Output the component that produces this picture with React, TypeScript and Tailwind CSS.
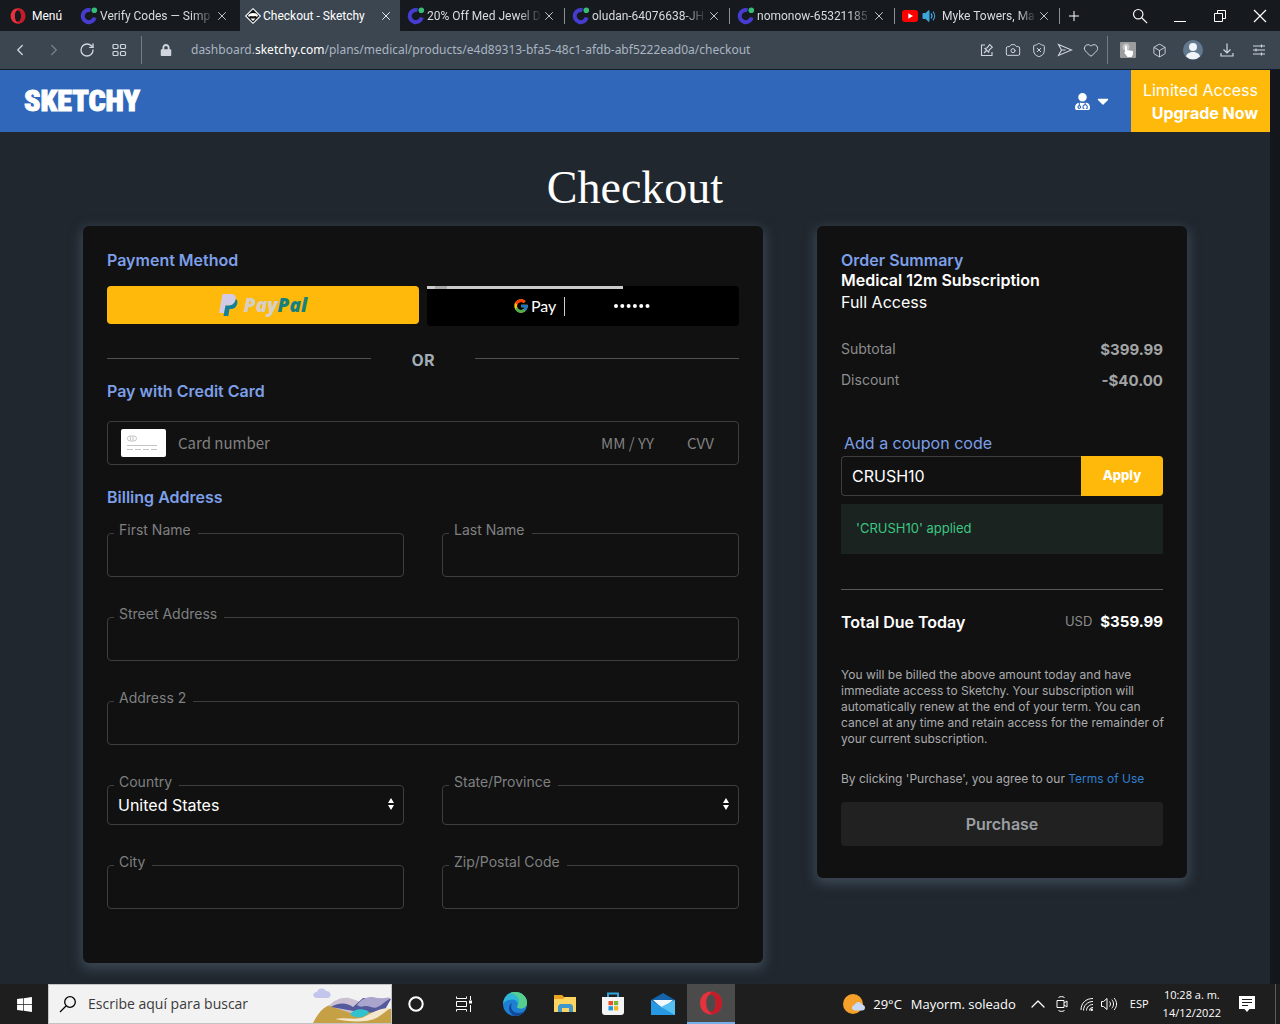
import { useState } from "react";
import type { ReactNode } from "react";
import {
  Box,
  Camera,
  ChevronLeft,
  ChevronRight,
  ChevronUp,
  Heart,
  Plus,
  RotateCw,
  ShieldX,
  X,
} from "lucide-react";
import { FaCaretDown, FaLock, FaUserMd, FaWindows } from "react-icons/fa";
import { FcGoogle } from "react-icons/fc";

function OperaLogo({ className }: { className: string }) {
  return (
    <svg className={className} viewBox="0 0 24 24" fillRule="evenodd">
      <path
        fill="#e5323c"
        d="M12 0.5C5.6 0.5 1 5.6 1 12s4.6 11.5 11 11.5S23 18.4 23 12 18.4 0.5 12 0.5zM12 3.2c2.900 0 4.700 3.700 4.700 8.800s-1.800 8.800-4.700 8.800S7.300 17.100 7.300 12 9.100 3.200 12 3.200z"
      />
      <path
        fill="#c51a27"
        d="M14.500 1c4.800 1 8.500 5.400 8.500 11s-3.700 10-8.500 11c-2 .3-3.500-.9-4.600-2.700 4.200 1.800 6.800-2.600 6.800-8.300S14.100 1.900 9.900 3.700C11 1.900 12.500.7 14.500 1z"
      />
    </svg>
  );
}

function SimplyIcon() {
  return (
    <svg className="h-[18px] w-[18px] shrink-0" viewBox="0 0 18 18" fill="none">
      <path d="M10.500 3.200A6.100 6.100 0 1 0 14.700 10.600" stroke="#463cd0" strokeWidth="4" />
      <circle cx="14.300" cy="3.200" r="2.800" fill="#35bd74" />
    </svg>
  );
}

function SketchyIcon() {
  return (
    <svg className="h-4 w-4 shrink-0" viewBox="0 0 16 16">
      <path d="M8 .7L15.300 8 8 15.300.7 8z" fill="#111" stroke="#e8eaec" strokeWidth="1.200" />
      <path d="M3 7.500C4.500 4 11.500 4 13 7.500L12 9c-1-1-2-1.200-2.500-.8h-3C6 7.800 5 8 4 9z" fill="#fff" />
      <path d="M5.500 10.500h5L8 13z" fill="#fff" />
    </svg>
  );
}

function YoutubeIcon() {
  return (
    <>
      <svg className="h-[18px] w-4 shrink-0" viewBox="0 0 16 18">
        <rect y="3" width="16" height="12" rx="3" fill="#f00" />
        <path d="M6.300 6.300v5.400L11 9z" fill="#fff" />
      </svg>
      <svg className="mx-1 h-[14px] w-[14px] shrink-0" viewBox="0 0 14 14" fill="none" stroke="#3fa4dc">
        <path d="M1 4.500h2.500L7 1.500v11L3.500 9.500H1z" fill="#3fa4dc" />
        <path d="M9 4.500c1.200 1.400 1.200 3.600 0 5M11 2.700c2.200 2.500 2.200 6.100 0 8.600" strokeWidth="1.200" />
      </svg>
    </>
  );
}

function MagnifierIcon({ className }: { className: string }) {
  return (
    <svg className={className} viewBox="0 0 18 18" fill="none" stroke="currentColor" strokeWidth="1.300">
      <circle cx="7" cy="7" r="5.300" />
      <path d="M11 11l6 6" />
    </svg>
  );
}

interface TabProps {
  icon: ReactNode;
  title: string;
  active?: boolean;
  divider?: boolean;
}

function BrowserTab({ icon, title, active, divider }: TabProps) {
  return (
    <div
      className={`flex min-w-0 items-center ${
        active ? "w-[160px] bg-[#3c4651] pr-[7px] pl-[5px] text-white" : "text-[#d9dcdf]"
      } ${divider ? "w-[165px] pl-[7px]" : ""} ${!active && !divider ? "w-[165px] pr-[11px] pl-[5px]" : ""}`}
    >
      {icon}
      <span
        className={`ml-[2px] min-w-0 flex-1 overflow-hidden whitespace-nowrap ${
          active ? "" : "[mask-image:linear-gradient(to_right,black_80%,transparent)]"
        }`}
      >
        {title}
      </span>
      <button aria-label={`Close ${title}`} className="shrink-0">
        <X size={14} strokeWidth={1.5} />
      </button>
      {divider && <span className="ml-2 h-4 w-px shrink-0 bg-[#8b9096]" />}
    </div>
  );
}

function TabStrip() {
  return (
    <div className="flex h-[31px] bg-[#16191e] font-['Roboto',sans-serif] text-xs text-white">
      <button className="flex w-[75px] shrink-0 items-center gap-[6px] pl-[10px]">
        <OperaLogo className="h-4 w-4" />
        Menú
      </button>
      <BrowserTab icon={<SimplyIcon />} title="Verify Codes — Simp" />
      <BrowserTab icon={<SketchyIcon />} title="Checkout - Sketchy" active />
      <BrowserTab icon={<SimplyIcon />} title="20% Off Med Jewel D" divider />
      <BrowserTab icon={<SimplyIcon />} title="oludan-64076638-JH" divider />
      <BrowserTab icon={<SimplyIcon />} title="nomonow-65321185" divider />
      <BrowserTab icon={<YoutubeIcon />} title="Myke Towers, Ma" divider />
      <button aria-label="New tab" className="ml-[6px]">
        <Plus size={16} strokeWidth={1.5} />
      </button>
      <div className="ml-auto flex shrink-0 items-center gap-6 pr-3">
        <button aria-label="Search tabs">
          <MagnifierIcon className="h-4 w-4" />
        </button>
        <button aria-label="Minimize" className="flex h-4 w-4 items-end justify-center pb-[2px]">
          <span className="h-px w-3 bg-white" />
        </button>
        <button aria-label="Restore">
          <svg className="h-4 w-4" viewBox="0 0 16 16" fill="none" stroke="currentColor">
            <path d="M2.500 5.500h8v8h-8zM5.500 5.500v-3h8v8h-3" />
          </svg>
        </button>
        <button aria-label="Close window">
          <svg className="h-4 w-4" viewBox="0 0 16 16" stroke="currentColor" strokeWidth="1.200">
            <path d="M2 2l12 12M14 2L2 14" />
          </svg>
        </button>
      </div>
    </div>
  );
}

function AddressBar() {
  return (
    <div className="flex h-[39px] items-center border-b border-[#101b2a] bg-[#3c4651] text-[#cfd6dd]">
      <div className="flex items-center gap-4 pl-[11px]">
        <button aria-label="Back">
          <ChevronLeft size={18} strokeWidth={1.750} />
        </button>
        <button aria-label="Forward" className="text-[#75808b]">
          <ChevronRight size={18} strokeWidth={1.750} />
        </button>
        <button aria-label="Reload">
          <RotateCw size={16} strokeWidth={2} />
        </button>
        <button aria-label="Speed dial">
          <svg className="h-4 w-4" viewBox="0 0 16 16" fill="none" stroke="currentColor" strokeWidth="1.200">
            <rect x="2" y="2.500" width="5" height="4" rx="1" />
            <rect x="9.500" y="2.500" width="5" height="4" rx="1" />
            <rect x="2" y="9.500" width="5" height="4" rx="1" />
            <rect x="9.500" y="9.500" width="5" height="4" rx="1" />
          </svg>
        </button>
      </div>
      <span className="ml-[14px] h-7 w-px bg-[#727c86]" />
      <FaLock size={12} className="mr-[19px] ml-[18px] shrink-0" />
      <p className="min-w-0 flex-1 truncate font-['Noto_Sans',sans-serif] text-xs text-[#a9b5c1]">
        dashboard.<span className="text-white">sketchy.com</span>
        /plans/medical/products/e4d89313-bfa5-48c1-afdb-abf5222ead0a/checkout
      </p>
      <div className="flex shrink-0 items-center gap-[10px]">
        <button aria-label="Pin">
          <svg className="h-4 w-4" viewBox="0 0 16 16" fill="none" stroke="currentColor" strokeWidth="1.100">
            <path d="M6 3H2.500v10.500H13V10" />
            <path d="M5 11l3-3M6 6.500l3.700 3.700.6-2.400 3-2.600L10.700 2.500 8.300 5.700z" />
          </svg>
        </button>
        <button aria-label="Snapshot">
          <Camera size={16} strokeWidth={1.500} />
        </button>
        <button aria-label="Blocker">
          <ShieldX size={16} strokeWidth={1.500} />
        </button>
        <button aria-label="Send">
          <svg className="h-4 w-4" viewBox="0 0 16 16" fill="none" stroke="currentColor" strokeWidth="1.100">
            <path d="M1.500 2.500L14.500 8l-13 5.500L4.500 8zM4.500 8h4" />
          </svg>
        </button>
        <button aria-label="Bookmark">
          <Heart size={16} strokeWidth={1.500} />
        </button>
      </div>
      <span className="mr-3 ml-2 h-7 w-px bg-[#727c86]" />
      <div className="flex shrink-0 items-center gap-4 pr-[13px]">
        <button aria-label="Extension">
          <svg className="h-4 w-4" viewBox="0 0 16 16">
            <rect width="16" height="16" rx="1" fill="#9b9d9e" />
            <circle cx="6" cy="5" r="3.500" fill="#c4c5c6" />
            <path d="M5 4.500c0-1.300 2-1.300 2 0V8l6 1v3.500L11.500 15H7.500L4 10.500l1-.5z" fill="#fff" />
          </svg>
        </button>
        <button aria-label="Extensions">
          <Box size={15} strokeWidth={1.500} />
        </button>
        <button aria-label="Profile">
          <svg className="h-5 w-5" viewBox="0 0 20 20">
            <circle cx="10" cy="10" r="10" fill="#61788f" />
            <circle cx="10" cy="7" r="4" fill="#f1f4f8" />
            <path d="M3 16.500c1-6 13-6 14 0a10 10 0 0 1-14 0z" fill="#f1f4f8" />
          </svg>
        </button>
        <button aria-label="Downloads">
          <svg className="h-4 w-4" viewBox="0 0 16 16" fill="none" stroke="currentColor" strokeWidth="1.200">
            <path d="M8 1.500v9M4.500 7.500L8 11l3.500-3.500M2 11v3h12v-3" />
          </svg>
        </button>
        <button aria-label="Easy setup">
          <svg className="h-4 w-4" viewBox="0 0 16 16" stroke="currentColor" strokeWidth="1.200">
            <path d="M2 4h12M2 8h12M2 12h12M10.500 2.500v3M5 6.500v3M10.500 10.500v3" />
          </svg>
        </button>
      </div>
    </div>
  );
}

function SiteHeader() {
  return (
    <header className="flex h-[62px] items-center bg-[#3067ba] pl-6 text-white">
      <a
        href="#"
        className="font-['Roboto_Condensed','Liberation_Sans_Narrow','Roboto',sans-serif] text-3xl font-black [-webkit-text-stroke:1px_white]"
      >
        SKETCHY
      </a>
      <button aria-label="Account menu" className="mr-[19px] ml-auto flex items-center gap-[3px]">
        <FaUserMd size={17} />
        <FaCaretDown size={18} />
      </button>
      <a href="#" className="flex h-full flex-col justify-center bg-[#ffb90a] px-3 pt-[2px] text-right leading-[23px]">
        <span>Limited Access</span>
        <span className="font-bold">Upgrade Now</span>
      </a>
    </header>
  );
}

interface FieldProps {
  id: string;
  label: string;
  wide?: boolean;
  options?: string[];
}

function Field({ id, label, wide, options }: FieldProps) {
  return (
    <div className={`relative ${wide ? "col-span-2" : ""}`}>
      <label
        htmlFor={id}
        className="absolute -top-3 left-[7px] bg-[#111] pr-[7px] pl-[5px] text-sm leading-[18px] text-[#7f8081]"
      >
        {label}
      </label>
      {options ? (
        <>
          <select
            id={id}
            className="block h-10 w-full appearance-none rounded border border-[#3d3e3f] bg-transparent px-[10px] text-base text-white"
          >
            {options.map((option) => (
              <option key={option}>{option}</option>
            ))}
          </select>
          <svg className="pointer-events-none absolute top-[13px] right-[9px] h-3 w-2" viewBox="0 0 8 12" fill="#fff">
            <path d="M4 0l3 5H1zM4 12l3-5H1z" />
          </svg>
        </>
      ) : (
        <input id={id} className="block h-11 w-full rounded border border-[#3d3e3f] bg-transparent px-[10px] text-white" />
      )}
    </div>
  );
}

function PaymentCard() {
  return (
    <section className="rounded-md bg-[#111] px-6 pt-6 pb-[54px] shadow-[0_4px_12px_2px_#3b4854]">
      <h2 className="font-semibold leading-5 text-[#7c9fe8]">Payment Method</h2>
      <div className="mt-4 grid grid-cols-2 items-start gap-2">
        <button aria-label="PayPal" className="flex h-[38px] items-center justify-center gap-[6px] rounded bg-[#ffb90a]">
          <svg className="h-[22px] w-[19px]" viewBox="0 0 19 22">
            <path d="M3.500 0h8c4.500 0 6 2.500 5 6-.8 3.500-3.500 5.500-7 5.500H6.500L5 19H0z" fill="#d3cbe6" />
            <path d="M16.800 5c2 1.200 1.900 3.500 1.200 5.500-1 3-3.200 4.500-6.500 4.500h-1l-1.200 7H4.500L6.500 11.500h3c3.500 0 6.300-2 7.300-6.500z" fill="#11809f" />
          </svg>
          <span className="font-['Open_Sans'] text-[19px] leading-5 font-extrabold text-[#d6cfc6] italic">
            Pay<span className="text-[#16807f]">Pal</span>
          </span>
        </button>
        <button
          aria-label="Google Pay"
          className="relative flex h-10 items-center rounded bg-black pl-[86px] text-white"
        >
          <span className="absolute top-0 left-0 flex h-[3px] w-[196px] bg-[#cbcbcb]">
            <span className="ml-2 w-3 bg-[#a9a9a9]" />
          </span>
          <FcGoogle size={16} />
          <span className="ml-[2px] font-['Lato']">Pay</span>
          <span className="ml-2 h-[19px] w-px bg-[#d0d0d0]" />
          <svg className="ml-[49px] h-1 w-9" viewBox="0 0 36 4" fill="#fff">
            <circle cx="2" cy="2" r="2" />
            <circle cx="8.300" cy="2" r="2" />
            <circle cx="14.600" cy="2" r="2" />
            <circle cx="20.900" cy="2" r="2" />
            <circle cx="27.200" cy="2" r="2" />
            <circle cx="33.500" cy="2" r="2" />
          </svg>
        </button>
      </div>

      <div className="mt-5 flex h-6 items-center gap-10">
        <span className="h-px flex-1 bg-[#4f5254]" />
        <span className="pt-px font-['Noto_Sans_CJK_SC',sans-serif] font-bold text-[#a3adb6]">OR</span>
        <span className="h-px flex-1 bg-[#4f5254]" />
      </div>

      <h2 className="mt-[11px] font-semibold leading-5 text-[#7c9fe8]">Pay with Credit Card</h2>
      <div className="mt-5 flex h-11 items-center rounded border border-[#3d3e3f] px-[13px] font-['Noto_Sans_CJK_SC',sans-serif] text-[15px]">
        <svg className="h-7 w-[45px] shrink-0" viewBox="0 0 45 28" fill="none" stroke="#c4c4c4">
          <rect width="45" height="28" rx="2" fill="#fff" stroke="none" />
          <rect x="6.500" y="7" width="9" height="5" rx="2.500" />
          <path d="M9.500 7.500v4M12 7.500v4" />
          <path d="M6 16.500h30" />
          <path d="M6 20.500h30" strokeDasharray="6 2" />
        </svg>
        <input
          aria-label="Card number"
          placeholder="Card number"
          className="ml-3 min-w-0 flex-1 bg-transparent text-white placeholder:text-[#808080]"
        />
        <input
          aria-label="Expiration date"
          placeholder="MM / YY"
          className="w-[86px] bg-transparent text-white placeholder:text-[#808080]"
        />
        <input
          aria-label="CVV"
          placeholder="CVV"
          className="w-[38px] bg-transparent text-white placeholder:text-[#808080]"
        />
      </div>

      <h2 className="mt-[22px] font-semibold leading-5 text-[#7c9fe8]">Billing Address</h2>
      <div className="mt-[26px] grid grid-cols-2 gap-x-[38px] gap-y-10">
        <Field id="first-name" label="First Name" />
        <Field id="last-name" label="Last Name" />
        <Field id="street" label="Street Address" wide />
        <Field id="address-2" label="Address 2" wide />
        <Field id="country" label="Country" options={["United States", "Mexico", "Canada"]} />
        <Field id="state" label="State/Province" options={["", "California", "New York"]} />
        <Field id="city" label="City" />
        <Field id="zip" label="Zip/Postal Code" />
      </div>
    </section>
  );
}

function OrderSummary() {
  const [coupon, setCoupon] = useState("CRUSH10");

  return (
    <section className="rounded-md bg-[#111] px-6 pt-6 pb-8 text-white shadow-[0_4px_12px_2px_#3b4854]">
      <h2 className="font-semibold leading-5 text-[#7c9fe8]">Order Summary</h2>
      <p className="font-semibold leading-5">Medical 12m Subscription</p>
      <p className="leading-6">Full Access</p>

      <dl className="mt-[19px] text-[#8c8d8e]">
        <div className="flex h-[31px] items-center justify-between">
          <dt className="text-sm">Subtotal</dt>
          <dd className="pt-[3px] text-[15px] font-bold text-[#a3a4a5]">$399.99</dd>
        </div>
        <div className="flex h-[31px] items-center justify-between">
          <dt className="text-sm">Discount</dt>
          <dd className="pt-[3px] text-[15px] font-bold text-[#a3a4a5]">-$40.00</dd>
        </div>
      </dl>

      <label htmlFor="coupon" className="mt-9 mb-px block pl-[3px] leading-6 text-[#7c9fe8]">
        Add a coupon code
      </label>
      <div className="flex h-10">
        <input
          id="coupon"
          value={coupon}
          onChange={(e) => setCoupon(e.target.value)}
          className="min-w-0 flex-1 rounded-l border border-r-0 border-[#3d3e3f] bg-transparent px-[10px] text-white"
        />
        <button className="w-[82px] rounded-r bg-[#ffb90a] text-[13px] font-extrabold">Apply</button>
      </div>
      <p className="mt-2 flex h-[50px] items-center bg-[#1a2320] px-[15px] text-[13px] text-[#3dc583]">
        'CRUSH10' applied
      </p>

      <div className="mt-[35px] flex items-center justify-between border-t border-[#58595a] pt-5">
        <span className="font-semibold">Total Due Today</span>
        <span className="flex items-center gap-2">
          <span className="text-[13px] text-[#8c8d8e]">USD</span>
          <span className="text-[15px] font-bold">$359.99</span>
        </span>
      </div>

      {/* slight overhang so the renewal copy keeps its five lines */}
      <p className="mt-[33px] -mr-1 text-xs leading-4 text-[#a9abad]">
        You will be billed the above amount today and have immediate access to Sketchy. Your subscription will
        automatically renew at the end of your term. You can cancel at any time and retain access for the remainder of
        your current subscription.
      </p>
      <p className="mt-6 text-xs leading-4 text-[#a9abad]">
        By clicking 'Purchase', you agree to our{" "}
        <a href="#" className="text-[#2f80d0]">
          Terms of Use
        </a>
      </p>
      <button className="mt-[15px] h-11 w-full rounded bg-[#212121] font-semibold text-[#9b9fa3]">Purchase</button>
    </section>
  );
}

function TaskbarApps() {
  return (
    <div className="flex h-full shrink-0 items-stretch">
      <button aria-label="Cortana" className="flex w-12 items-center justify-center">
        <svg className="h-4 w-4" viewBox="0 0 16 16" fill="none">
          <circle cx="8" cy="8" r="6.700" stroke="#fff" strokeWidth="2" />
        </svg>
      </button>
      <button aria-label="Task view" className="flex w-12 items-center justify-center">
        <svg className="h-4 w-4" viewBox="0 0 16 16" fill="none" stroke="#fff">
          <path d="M.5.5v2h10v-2M.5 5.500h10v5H.5zM.5 15.500v-2h10v2M14.500 0v4M14.500 9v7" />
          <path d="M13 4.500h3v3h-3z" fill="#fff" stroke="none" />
        </svg>
      </button>
      <button aria-label="Edge" className="flex w-[53px] items-center justify-center">
        <svg className="h-6 w-6" viewBox="0 0 24 24">
          <circle cx="12" cy="12" r="12" fill="#1e7fd3" />
          <path d="M0 12C1 4 6 0 12 0c7 0 12 5 12 10.500 0 4-3 6-6.500 6-3 0-4-1.200-3-2.700C16 11 13 7.500 9.500 7.500 5 7.500 1.500 9 0 12z" fill="#2fb6d5" />
          <path d="M12 0c7 0 12 5 12 10.500 0 4-3 6-6.500 6-3 0-4-1.200-3-2.700C18 9 16 2.500 7 1.200A12 12 0 0 1 12 0z" fill="#55cf8b" />
          <path d="M9.500 11c-3 3-1 10 6 10 3 0 5-1 7-3.500C20 22 16 24 12 24 5 22 4 13 9.500 11z" fill="#124a9a" />
        </svg>
      </button>
      <button aria-label="File Explorer" className="flex w-[47px] items-center justify-center">
        <svg className="h-6 w-[22px]" viewBox="0 0 22 24">
          <path d="M0 3h8l2 2h12v15H0z" fill="#e9a520" />
          <path d="M0 7h9l2-2h11v15H0z" fill="#fcd462" />
          <path d="M4 20v-6l2-2h11l2 2v6h-4v-4H8v4z" fill="#3f97d0" />
        </svg>
      </button>
      <button aria-label="Microsoft Store" className="flex w-[50px] items-center justify-center">
        <svg className="h-6 w-6" viewBox="0 0 24 24">
          <path d="M7 6V1.500h10V6" fill="none" stroke="#2ea3dc" strokeWidth="2" />
          <path d="M1 5h22v15a3 3 0 0 1-3 3H4a3 3 0 0 1-3-3z" fill="#f4f4f4" />
          <path d="M7.500 9H12v4.200H7.500z" fill="#e8502c" />
          <path d="M13 9h4.200v4.200H13z" fill="#7bb62f" />
          <path d="M7.500 14.200H12v4.200H7.500z" fill="#1f9ade" />
          <path d="M13 14.200h4.200v4.200H13z" fill="#f6b51d" />
        </svg>
      </button>
      <button aria-label="Mail" className="flex w-[49px] items-center justify-center">
        <svg className="h-6 w-6" viewBox="0 0 24 24">
          <path d="M0 8l12-7 12 7v14H0z" fill="#1464ac" />
          <path d="M2 8h20L12 17z" fill="#eef5fb" />
          <path d="M0 8l12 8 12-8v15H0z" fill="#2799e2" />
          <path d="M3 8h18l-9 6.500z" fill="#f4f9fd" />
          <path d="M24 8v15L10 15z" fill="#57c0f2" />
        </svg>
      </button>
      <button aria-label="Opera" className="flex w-12 items-center justify-center border-b-2 border-[#76b0e6] bg-[#4b4b4b]">
        <OperaLogo className="h-6 w-6" />
      </button>
    </div>
  );
}

function Taskbar() {
  return (
    <footer className="flex h-10 items-center bg-[#1e1e1e] text-sm text-white">
      <button aria-label="Start" className="flex w-12 shrink-0 items-center justify-center">
        <FaWindows size={17} />
      </button>
      <div className="flex h-full w-[344px] items-center border border-[#c4c4c4] bg-[#f2f2f2] pl-[10px] text-black">
        <MagnifierIcon className="h-[18px] w-[18px] shrink-0 -scale-x-100" />
        <input
          aria-label="Escribe aquí para buscar"
          placeholder="Escribe aquí para buscar"
          className="ml-[11px] min-w-0 flex-1 bg-transparent placeholder:text-[#3a3a3a]"
        />
        <svg className="h-full w-[78px] shrink-0" viewBox="0 0 78 38">
          <path d="M4 13c-5 0-5-6 0-6 1-5 8-4 9-1 6 0 6 7 1 7z" fill="#c3c6ea" />
          <path d="M0 38C8 22 15 20 22 19l56 5v14z" fill="#c6a044" />
          <path d="M16 21c5-6 12-9 20-8 8 2 14 5 18 9l-16 6z" fill="#cbbfd3" />
          <path d="M18 22c9-5 16-4 22 0l10-9 28 1-8 14-24-1z" fill="#555a9c" />
          <path d="M44 20c6-8 14-9 20-7s10-2 14 0c-8 4-12 12-20 9s-8 2-14-2z" fill="#a9a5cd" />
          <path d="M37 29c4-6 15-6 19-2-2 5-14 8-19 2z" fill="#30c3cf" />
          <path d="M22 34c10-2 18 1 26-1s14-10 30-10c-8 4-12 12-26 13-10 1-20 0-30-2z" fill="#f3e7cf" />
        </svg>
      </div>
      <TaskbarApps />
      <div className="ml-auto flex h-full shrink-0 items-center text-[11px]">
        <svg className="h-[22px] w-[22px]" viewBox="0 0 22 22">
          <circle cx="10" cy="11" r="10" fill="#f5a02b" />
          <path d="M12 17.500c-4 0-4-5-.5-5.500 1-4 6.500-4 7.500-.5 4 .5 4 6 0 6z" fill="#c7d9f5" />
        </svg>
        <span className="ml-2 text-[13px]">29°C</span>
        <span className="ml-[9px] text-[13px]">Mayorm. soleado</span>
        <ChevronUp size={24} strokeWidth={1.250} className="ml-[10px]" />
        <svg className="ml-1 h-4 w-4" viewBox="0 0 16 16" fill="none" stroke="#fff">
          <path d="M3 4.500h7v7H3zM10 7l3-2v6l-3-2M4.500 1.500c2-1.200 4-1.200 6 0M4.500 14.500c2 1.200 4 1.200 6 0" />
        </svg>
        <svg className="ml-[9px] h-4 w-4" viewBox="0 0 16 16" fill="none" stroke="#fff">
          <path d="M2 14C2 7 7 2.500 14 2.500M4.500 14.500c0-5 4-9 9.500-9M7.500 14.500c0-3.500 3-6 6.500-6M10.500 14.500c0-2 1.500-3 3.500-3" />
          <circle cx="12.700" cy="13.700" r="1.300" fill="#fff" stroke="none" />
        </svg>
        <svg className="ml-[5px] h-4 w-[18px]" viewBox="0 0 18 16" fill="none" stroke="#fff">
          <path d="M1.500 5.500h2L7 2.500v11l-3.500-3h-2zM9.500 5.500c1.300 1.500 1.300 3.500 0 5M11.800 3.700c2.300 2.600 2.300 6 0 8.600M14 2c3.400 3.600 3.400 8.400 0 12" />
        </svg>
        <span className="ml-3">ESP</span>
        <p className="ml-[14px] text-center leading-[18px]">
          10:28 a. m.
          <br />
          14/12/2022
        </p>
        <button aria-label="Notifications" className="ml-[18px]">
          <svg className="h-4 w-4" viewBox="0 0 16 16">
            <path d="M0 0h16v13h-5.500L8 16l-2.500-3H0z" fill="#fff" />
            <path d="M3 3.500h10M3 6.500h10M3 9.500h6" stroke="#1e1e1e" />
          </svg>
        </button>
        <span className="mr-1 ml-5 h-full w-px bg-[#5c5c5c]" />
      </div>
    </footer>
  );
}

export default function App() {
  return (
    <div className="flex min-h-screen flex-col font-['Open_Sans',sans-serif]">
      <TabStrip />
      <AddressBar />
      <div className="flex flex-1 bg-[#20272f] font-['Inter',sans-serif]">
        <div className="min-w-0 flex-1">
          <SiteHeader />
          <main className="px-6 pt-8 pb-5">
            <h1 className="text-center font-['Liberation_Serif',serif] text-[46px] leading-[48px] text-white">Checkout</h1>
            <div className="mx-auto mt-[14px] grid max-w-[1104px] grid-cols-[minmax(0,1fr)_370px] items-start gap-[54px]">
              <PaymentCard />
              <OrderSummary />
            </div>
          </main>
        </div>
        <div className="w-[10px] shrink-0 bg-[#13161a]" />
      </div>
      <Taskbar />
    </div>
  );
}
